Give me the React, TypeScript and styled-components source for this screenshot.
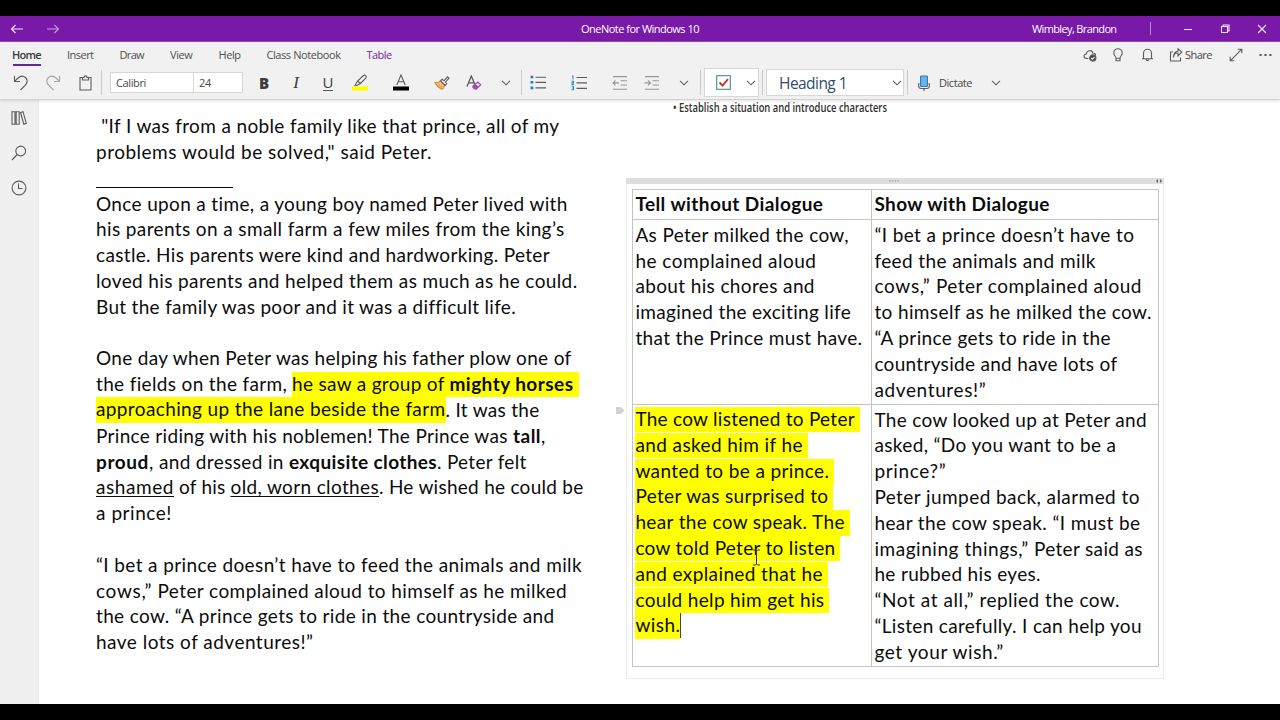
import React, { useLayoutEffect, useRef, useState } from 'react';
import styled, { createGlobalStyle, css } from 'styled-components';

const Global = createGlobalStyle`
  * { box-sizing: border-box; }
  body { margin: 0; background: #000; overflow: hidden; }
`;

const uiFont = '"Open Sans", "Noto Sans", sans-serif';
const noteFont = 'Lato, "Open Sans", sans-serif';

/* ---------- text set to a fixed measure ---------- */

type Look = { $bold?: boolean; $mark?: boolean };

const Measure = styled.span<Look & { $w: number }>`
  display: block;
  flex: none;
  width: ${(p) => p.$w}px;
  white-space: pre;
  ${(p) => p.$bold && css`font-weight: 700;`}
  ${(p) => p.$mark && css`
    background: #ffff00;
    height: 25.4px;
    margin-top: 0.5px;
    line-height: 24.8px;
  `}
`;

const Inner = styled.span<{ $under?: boolean }>`
  display: inline-block;
  transform-origin: 0 50%;
  ${(p) => p.$under && css`
    text-decoration: underline;
    text-decoration-thickness: 1px;
    text-underline-offset: 2px;
    text-decoration-skip-ink: none;
  `}
`;

type FitProps = { w: number; text: string; bold?: boolean; mark?: boolean; under?: boolean; pad?: number; squeeze?: boolean };

function Fit({ w, text, bold, mark, under, pad = 0, squeeze }: FitProps) {
  const ref = useRef<HTMLSpanElement>(null);
  const [natural, setNatural] = useState(0);
  useLayoutEffect(() => {
    if (ref.current) setNatural(ref.current.getBoundingClientRect().width);
  }, []);
  const style = !natural
    ? undefined
    : squeeze
      ? { transform: `scaleX(${w / natural})` }
      : { letterSpacing: (w - natural) / text.length };
  return (
    <Measure $w={w + pad} $bold={bold} $mark={mark}>
      <Inner ref={ref} $under={under} style={style}>{text}</Inner>
    </Measure>
  );
}

/* ---------- window frame ---------- */

const Screen = styled.div`
  width: 1280px;
  height: 720px;
  padding: 16px 0;
  background: #000;
  display: flex;
  flex-direction: column;
`;

const TitleBar = styled.header`
  height: 26px;
  flex: none;
  display: flex;
  align-items: center;
  background: #7819a8;
  border-bottom: 1px solid #8f45b8;
  color: #fff;
  font: 11px/27px ${uiFont};
`;

const Slot = styled.span<{ $w: number }>`
  width: ${(p) => p.$w}px;
  height: 100%;
  flex: none;
  display: flex;
  align-items: center;
  justify-content: center;
`;

const Space = styled.span<{ $w: number }>`
  width: ${(p) => p.$w}px;
  flex: none;
`;

const TitleRule = styled.span`
  width: 1px;
  height: 13px;
  background: #b78ad0;
`;

const Icon = styled.svg`
  display: block;
  fill: none;
  stroke: #5c5c5c;
  stroke-width: 1.1;
  flex: none;
`;

const TitleIcon = styled(Icon)<{ $dim?: boolean }>`
  stroke: ${(p) => (p.$dim ? '#c79bdc' : '#f5e6fb')};
`;

/* ---------- ribbon ---------- */

const Ribbon = styled.div`
  height: 58px;
  flex: none;
  background: #f2f1f1;
  border-bottom: 1px solid #d3d2d1;
  box-shadow: 0 1px 3px rgba(0, 0, 0, 0.12);
  position: relative;
  z-index: 1;
  color: #484848;
  font: 11px/16px ${uiFont};
`;

const Tabs = styled.nav`
  height: 26px;
  padding-left: 12px;
  display: flex;
  align-items: center;
`;

const Tab = styled.span<{ $on?: boolean; $tint?: boolean }>`
  height: 26px;
  padding-top: 5px;
  margin-right: 26px;
  color: ${(p) => (p.$tint ? '#7425a0' : p.$on ? '#3a3a3a' : '#505050')};
  font-weight: ${(p) => (p.$on ? 600 : 400)};
  ${(p) => p.$on && css`
    background: linear-gradient(#65269c, #65269c) 1px 22px / 29px 2px no-repeat;
  `}
`;

const Tools = styled.div`
  height: 31px;
  display: flex;
  align-items: center;
  padding: 0 0 1.5px 5px;
`;

const Rule = styled.span`
  width: 1px;
  height: 25px;
  flex: none;
  background: #cccbca;
`;

const FontBox = styled.div`
  height: 21px;
  display: flex;
  flex: none;
  background: #fff;
  border: 1px solid #d8d7d6;
  line-height: 19px;
`;

const FontField = styled.div<{ $w: number }>`
  width: ${(p) => p.$w}px;
  padding-left: 5px;
  & + & { border-left: 1px solid #d8d7d6; }
`;

const PickBox = styled.div<{ $w: number; $h: number }>`
  width: ${(p) => p.$w}px;
  height: ${(p) => p.$h}px;
  flex: none;
  display: flex;
  align-items: center;
  background: #fff;
  border: 1px solid #d8d7d6;
`;

const HeadingName = styled.span`
  font-size: 15.5px;
  line-height: 22px;
  color: #2f4d6b;
  padding-left: 12px;
`;

const Letter = styled.span<{ $kind: 'b' | 'i' | 'u' }>`
  color: #3c3c3c;
  line-height: 20px;
  ${(p) => p.$kind === 'b' && css`font: 800 15px/20px ${uiFont};`}
  ${(p) => p.$kind === 'i' && css`font: italic 17px/20px "Liberation Serif", serif;`}
  ${(p) => p.$kind === 'u' && css`
    font: 15px/16px ${uiFont};
    height: 17px;
    border-bottom: 1px solid #555;
  `}
`;

/* ---------- page ---------- */

const Body = styled.div`
  flex: 1;
  min-height: 0;
  display: flex;
  background: #fff;
`;

const Rail = styled.aside`
  width: 39px;
  flex: none;
  background: #f1f0f0;
  border-right: 1px solid #ebebeb;
  display: flex;
  flex-direction: column;
  align-items: center;
`;

const RailItem = styled.span`
  height: 35px;
  display: flex;
  align-items: center;
`;

const Note = styled.article`
  width: 587px;
  flex: none;
  padding: 13.2px 0 0 57px;
  font: 19px/25.8px ${noteFont};
  color: #0c0c0c;
`;

const Line = styled.div`
  height: 25.8px;
  display: flex;
`;

const Blank = styled.div`
  width: 137px;
  height: 25.8px;
  background: linear-gradient(#0c0c0c, #0c0c0c) 0 22px / 100% 1.4px no-repeat;
`;

const Side = styled.section`
  width: 538px;
  flex: none;
`;

const Bullet = styled.div`
  height: 78px;
  padding-left: 47px;
  font: 600 12.5px/15px ${uiFont};
  color: #303030;
`;

const TableFrame = styled.div`
  position: relative;
  height: 501px;
  border: 1px solid #ebebeb;
  border-top: 0;
`;

const Grip = styled.div`
  height: 6px;
  margin: 0 -1px 5px;
  background: #dedede;
  display: flex;
  align-items: center;
  justify-content: flex-end;
`;

const GridTable = styled.div`
  width: 527px;
  margin-left: 5px;
  padding: 1px;
  display: grid;
  grid-template-columns: 238px 286px;
  grid-template-rows: 29px 184px 261px;
  gap: 1px;
  background: #c4c4c4;
`;

const Cell = styled.div<{ $top: number }>`
  background: #fff;
  padding: ${(p) => p.$top}px 0 0 2.4px;
  font: 19px/25.8px ${noteFont};
  color: #0c0c0c;
`;

const Caret = styled.span`
  width: 1px;
  height: 25px;
  background: #444;
`;

const RowHandle = styled.svg`
  position: absolute;
  left: -11px;
  top: 228px;
`;

const Pointer = styled.svg`
  position: absolute;
  left: 125px;
  top: 371px;
`;

/* ---------- small drawings ---------- */

const Chevron = () => (
  <Icon width="10" height="6" viewBox="0 0 10 6"><path d="M1 0.8 5 4.8 9 0.8" /></Icon>
);

const Undo = ({ flip }: { flip?: boolean }) => (
  <Icon width="16" height="16" viewBox="0 0 16 16" opacity={flip ? 0.5 : 1}>
    <g transform={flip ? 'matrix(-1 0 0 1 16 0)' : undefined}>
      <path d="M1.5 1v5.5H7M1.8 6.2 5 3C7.5 .8 10.5 .8 12.5 2.5 15 4.8 14.5 8 12.3 10.1L7.5 15" />
    </g>
  </Icon>
);

const Indent = ({ right }: { right?: boolean }) => (
  <Icon width="16" height="14" viewBox="0 0 16 14" opacity="0.6">
    <path d="M1 .6h14M8.5 4.8H15M8.5 9H15M1 13.3h14" />
    <path d={right ? 'M.5 6.9h6M4 4.4 6.500 6.900 4 9.400' : 'M7 6.9H1M3.5 4.4 1 6.9l2.5 2.5'} />
  </Icon>
);

const leftLines: FitProps[][] = [
  [{ text: ' "If I was from a noble family like that prince, all of my', w: 463.5 }],
  [{ text: 'problems would be solved," said Peter.', w: 336 }],
  [],
  [{ text: 'Once upon a time, a young boy named Peter lived with', w: 472 }],
  [{ text: 'his parents on a small farm a few miles from the king’s', w: 468.5 }],
  [{ text: 'castle. His parents were kind and hardworking. Peter', w: 454 }],
  [{ text: 'loved his parents and helped them as much as he could.', w: 481.5 }],
  [{ text: 'But the family was poor and it was a difficult life.', w: 419 }],
  [{ text: ' ', w: 5 }],
  [{ text: 'One day when Peter was helping his father plow one of', w: 475.5 }],
  [
    { text: 'the fields on the farm, ', w: 196 },
    { text: 'he saw a group of ', w: 157.5, mark: true },
    { text: 'mighty horses ', w: 129, mark: true, bold: true },
  ],
  [{ text: 'approaching up the lane beside the farm', w: 349.5, mark: true }, { text: '. It was the', w: 94 }],
  [
    { text: 'Prince riding with his noblemen! The Prince was ', w: 417 },
    { text: 'tall', w: 28, bold: true },
    { text: ',', w: 6 },
  ],
  [
    { text: 'proud', w: 53, bold: true },
    { text: ', and dressed in ', w: 140 },
    { text: 'exquisite clothes', w: 148, bold: true },
    { text: '. Peter felt', w: 89.5 },
  ],
  [
    { text: 'ashamed', w: 78, under: true },
    { text: ' of his ', w: 56.5 },
    { text: 'old, worn clothes', w: 148.5, under: true },
    { text: '. He wished he could be', w: 204.5 },
  ],
  [{ text: 'a prince!', w: 76 }],
  [{ text: ' ', w: 5 }],
  [{ text: '“I bet a prince doesn’t have to feed the animals and milk', w: 486 }],
  [{ text: 'cows,” ', w: 61.5 }, { text: 'Peter complained aloud to himself as he milked', w: 409.5 }],
  [{ text: 'the cow. “A prince gets to ride in the countryside and', w: 458.5 }],
  [{ text: 'have lots of adventures!”', w: 217.5 }],
];

type Segment = [string, number];

const tellLines: Segment[][] = [
  [['As Peter milked the cow,', 213.5]],
  [['he complained aloud', 181]],
  [['about his chores and', 179.5]],
  [['imagined the exciting life', 216]],
  [['that the Prince must have.', 227]],
];

const showLines: Segment[][] = [
  [['“I bet a prince doesn’t have to', 260]],
  [['feed the animals and milk', 221.5]],
  [['cows,” ', 61.5], ['Peter complained aloud', 206]],
  [['to himself as he milked the cow.', 277.5]],
  [['“A prince gets to ride in the', 236.5]],
  [['countryside and have lots of', 243]],
  [['adventures!”', 112]],
];

const markedLines: [string, number, number][] = [
  ['The cow listened to Peter', 219.5, 5],
  ['and asked him if he', 167.5, 5],
  ['wanted to be a prince.', 194, 5],
  ['Peter was surprised to', 193, 5],
  ['hear the cow speak. The', 209.5, 5],
  ['cow told Peter to listen', 200, 5],
  ['and explained that he', 187.5, 5],
  ['could help him get his', 189, 5],
  ['wish.', 45, 0],
];

const replyLines: Segment[][] = [
  [['The cow looked up at Peter and', 272.5]],
  [['asked, “Do you want to be a', 242]],
  [['prince?”', 72]],
  [['Peter jumped back, alarmed to', 265.5]],
  [['hear the cow speak. “I must be', 266]],
  [['imagining things,” ', 159.5], ['Peter said as', 109]],
  [['he rubbed his eyes.', 166.5]],
  [['“Not at all,” ', 105], ['replied the cow.', 140.5]],
  [['“Listen carefully. I can help you', 267.5]],
  [['get your wish.”', 129.5]],
];

const Lines = ({ rows }: { rows: Segment[][] }) => (
  <>
    {rows.map((segs) => (
      <Line key={segs[0][0]}>{segs.map(([text, w]) => <Fit key={text} text={text} w={w} />)}</Line>
    ))}
  </>
);

const tabs: [string, number][] = [
  ['Home', 29], ['Insert', 26.5], ['Draw', 24.5], ['View', 22.5], ['Help', 22], ['Class Notebook', 74], ['Table', 25],
];

export default function App() {
  return (
    <Screen>
      <Global />
      <TitleBar>
        <Space $w={10} />
        <TitleIcon width="14" height="10" viewBox="0 0 14 10"><path d="M13 5H1.5M5.5 1l-4 4 4 4" /></TitleIcon>
        <Space $w={22} />
        <TitleIcon $dim width="14" height="10" viewBox="0 0 14 10"><path d="M1 5h11.5M8.5 1l4 4-4 4" /></TitleIcon>
        <Space $w={521} />
        <Fit text="OneNote for Windows 10" w={118} />
        <Space $w={333} />
        <Fit text="Wimbley, Brandon" w={84.5} />
        <Space $w={33.5} />
        <TitleRule />
        <Space $w={32} />
        <TitleIcon width="10" height="10" viewBox="0 0 10 10"><path d="M1 5.5h8" /></TitleIcon>
        <Space $w={27} />
        <TitleIcon width="10" height="10" viewBox="0 0 10 10"><path d="M1.5 2.5h6v6h-6zM3 2.3V1h6v6H7.8" /></TitleIcon>
        <Space $w={27} />
        <TitleIcon width="10" height="10" viewBox="0 0 10 10"><path d="m1 1 8 8M9 1 1 9" /></TitleIcon>
      </TitleBar>

      <Ribbon>
        <Tabs>
          {tabs.map(([name, w], i) => (
            <Tab key={name} $on={i === 0} $tint={i === 6}><Fit text={name} w={w} /></Tab>
          ))}
          <Space $w={665} />
          <Icon width="14" height="13" viewBox="0 0 14 13">
            <path d="M5.5 9.5H3.5C.3 9.3.2 5.3 3.3 5 3.6 1 9 .5 9.7 4c2 0 3 1 2.8 2.5" />
            <circle cx="9.8" cy="9" r="3.1" fill="#484848" /><path d="m8.3 9 1.2 1.2 2-2.2" stroke="#fff" />
          </Icon>
          <Space $w={15.5} />
          <Icon width="12" height="14" viewBox="0 0 12 14">
            <path d="M4 10.3C4 8.3 1.8 7.5 1.8 4.9a4.2 4.2 0 0 1 8.4 0C10.2 7.5 8 8.3 8 10.3zM4 10.3v2.5h4v-2.5" />
          </Icon>
          <Space $w={16.5} />
          <Icon width="13" height="14" viewBox="0 0 13 14">
            <path d="M1 10.7h11M2.5 10.5V5.2a4 4 0 0 1 8 0v5.3M5 11c.2 2.2 2.8 2.2 3 0" />
          </Icon>
          <Space $w={15} />
          <Icon width="14" height="14" viewBox="0 0 14 14">
            <path d="M4 4H1.5v9h10V9.5M4.5 9.5C4.5 6 6.5 5 9 5v2.8L12.8 4 9 .8v2.4C5.8 3.5 4.5 6 4.5 9.5z" />
          </Icon>
          <Space $w={2.5} />
          <Fit text="Share" w={27} />
          <Space $w={17} />
          <Icon width="14" height="14" viewBox="0 0 14 14"><path d="M1.2 12.8 12.8 1.2M8.7 1.2h4.1v4.1M1.2 8.7v4.1h4.1" /></Icon>
          <Space $w={15.5} />
          <Icon width="13" height="4" viewBox="0 0 13 4">
            <path d="M.5 2h2.2M5.400 2h2.200M10.300 2h2.200" style={{ strokeWidth: 2 }} />
          </Icon>
        </Tabs>

        <Tools>
          <Slot $w={32}><Undo /></Slot>
          <Slot $w={32}><Undo flip /></Slot>
          <Slot $w={32}>
            <Icon width="13" height="16" viewBox="0 0 13 16">
              <path d="M3.5 2.5H1v12.5h11V2.5H9.5M3.5 5V2.5H5C5 .3 8 .3 8 2.5h1.5V5z" />
            </Icon>
          </Slot>
          <Rule />
          <Space $w={8} />
          <FontBox>
            <FontField $w={82}><Fit text="Calibri" w={30} /></FontField>
            <FontField $w={49}><Fit text="24" w={12} /></FontField>
          </FontBox>
          <Space $w={5} />
          <Slot $w={32}><Letter $kind="b">B</Letter></Slot>
          <Slot $w={32}><Letter $kind="i">I</Letter></Slot>
          <Slot $w={32}><Letter $kind="u">U</Letter></Slot>
          <Slot $w={32}>
            <Icon width="16" height="17" viewBox="0 0 16 17">
              <rect x="0" y="12.5" width="16" height="4" fill="#ffff00" stroke="none" />
              <path d="M3 11.5 5.5 7 11.5 1.5c1.5-1 3.5.8 2.5 2.3L8.5 9.5 4.8 11.5zM5.5 7l3 2.5" />
            </Icon>
          </Slot>
          <Slot $w={50}>
            <Icon width="16" height="17" viewBox="0 0 16 17">
              <rect x="0" y="12.5" width="16" height="4" fill="#000" stroke="none" />
              <path d="M3.8 11 8 1l4.2 10M5.2 7.7h5.6" />
            </Icon>
          </Slot>
          <Slot $w={32}>
            <Icon width="16" height="14" viewBox="0 0 16 14">
              <path d="M1 6.5c2 .5 4-.2 5.5-1.5l4.5 4.5C10 11.5 9 13 7.8 13.3 5 12 2.5 9.5 1 6.5z" fill="#f5c184" stroke="#df8a2b" />
              <path d="M6.5 4.8 8 3.2l2 1.5L13.5.8l1.5 1.4L11.5 6l1.2 1.8-1.5 1.7z" />
              <path d="m4.5 9.5 1.5-1M6.5 11.3l1.5-1.3" stroke="#df8a2b" />
            </Icon>
          </Slot>
          <Slot $w={32}>
            <Icon width="16" height="15" viewBox="0 0 16 15">
              <path d="M1 11.5 5.3 1l3.4 8M2.5 7.8h5.2" style={{ strokeWidth: 1.3 }} />
              <path d="M7 11.3 11.8 7l3 2.7L10 14H8.5L7 12.6z" fill="#f1ddf5" stroke="#9b45a8" />
              <path d="m7 11.3 3 2.7 2-1.8-3-2.7z" fill="#a34fb0" stroke="#9b45a8" />
            </Icon>
          </Slot>
          <Slot $w={31}><Chevron /></Slot>
          <Rule />
          <Slot $w={32}>
            <Icon width="16" height="15" viewBox="0 0 16 15">
              <path d="M5.5 2.2H16M5.5 7.4H16M5.5 12.9H16" />
              <path d="M.5 2h2.8M.5 7.3h2.8M.5 12.9h2.8" stroke="#2b7fb8" style={{ strokeWidth: 2.6 }} />
            </Icon>
          </Slot>
          <Slot $w={49}>
            <Icon width="16" height="16" viewBox="0 0 16 16">
              <path d="M5.5 2.5H16M5.5 7.9H16M5.5 13.4H16" />
              <path d="M1 1h1v3.5M.5 6.3h2v1.6H1v1.5h1.8M.5 11.3h2v3.5h-2M1 13h1.5" stroke="#3a8cc0" />
            </Icon>
          </Slot>
          <Slot $w={34}><Indent /></Slot>
          <Slot $w={30}><Indent right /></Slot>
          <Slot $w={33}><Chevron /></Slot>
          <Rule />
          <Space $w={3} />
          <PickBox $w={55} $h={29}>
            <Slot $w={37}>
              <Icon width="15" height="15" viewBox="0 0 15 15">
                <rect x=".7" y=".7" width="13.6" height="13.6" stroke="#3c8f96" />
                <path d="m3.5 7.5 3 3 5.5-6.3" stroke="#c8372d" style={{ strokeWidth: 1.9 }} />
              </Icon>
            </Slot>
            <Slot $w={17}><Chevron /></Slot>
          </PickBox>
          <Space $w={3} />
          <Rule />
          <Space $w={3} />
          <PickBox $w={138} $h={27}>
            <HeadingName><Fit text="Heading 1" w={68} /></HeadingName>
            <Space $w={45} />
            <Chevron />
          </PickBox>
          <Space $w={3} />
          <Rule />
          <Space $w={10} />
          <Icon width="12" height="16" viewBox="0 0 12 16">
            <rect x="2.6" y="1" width="6.8" height="10.5" rx=".8" fill="#69b5ea" stroke="#2f78ad" />
            <path d="M.7 8v3c0 1.500 1 2.500 2.500 2.500h5.600c1.500 0 2.500-1 2.500-2.500V8M6 13.500V16" />
          </Icon>
          <Space $w={9} />
          <Fit text="Dictate" w={33} />
          <Space $w={18.5} />
          <Chevron />
        </Tools>
      </Ribbon>

      <Body>
        <Rail>
          <RailItem>
            <Icon width="16" height="14" viewBox="0 0 16 14">
              <path d="M1 .8h3v12.4H1zM5.2 .8h3v12.4h-3zM9.5 1.5l2.500-.8L15.300 12.300l-2.500.9z" />
            </Icon>
          </RailItem>
          <RailItem>
            <Icon width="16" height="16" viewBox="0 0 16 16"><circle cx="9.7" cy="6" r="4.9" /><path d="M6.2 9.5 1 15" /></Icon>
          </RailItem>
          <RailItem>
            <Icon width="16" height="16" viewBox="0 0 16 16"><circle cx="8" cy="8" r="6.9" /><path d="M7.5 3.5V8.5H11.5" /></Icon>
          </RailItem>
        </Rail>

        <Note>
          {leftLines.map((segs, i) =>
            segs.length === 0
              ? <Blank key={i} />
              : <Line key={i}>{segs.map((s) => <Fit key={s.text} {...s} />)}</Line>,
          )}
        </Note>

        <Side>
          <Bullet><Fit squeeze text="• Establish a situation and introduce characters" w={214} /></Bullet>
          <TableFrame>
            <Grip>
              <Icon width="10" height="2" viewBox="0 0 10 2"><path d="M0 1h10" strokeDasharray="1.5 1.3" opacity=".6" /></Icon>
              <Space $w={257} />
              <Icon width="6" height="4" viewBox="0 0 6 4"><path d="M2 0v4L0 2zM4 0v4l2-2z" fill="#666" stroke="none" /></Icon>
              <Space $w={2} />
            </Grip>
            <GridTable>
              <Cell $top={1.3}><Line><Fit bold text="Tell without Dialogue" w={188} /></Line></Cell>
              <Cell $top={1.3}><Line><Fit bold text="Show with Dialogue" w={175.5} /></Line></Cell>
              <Cell $top={1.8}><Lines rows={tellLines} /></Cell>
              <Cell $top={1.8}><Lines rows={showLines} /></Cell>
              <Cell $top={1.6}>
                {markedLines.map(([text, w, pad]) => (
                  <Line key={text}>
                    <Fit mark text={text} w={w} pad={pad} />
                    {pad === 0 && <Caret />}
                  </Line>
                ))}
              </Cell>
              <Cell $top={1.6}><Lines rows={replyLines} /></Cell>
            </GridTable>
            <RowHandle width="9" height="9" viewBox="0 0 9 9"><path d="M0 1h5l3.500 3.500L5 8H0z" fill="#d2d2d2" /></RowHandle>
            <Pointer width="9" height="17" viewBox="0 0 9 17">
              <path d="M1 1h2.500l1 1 1-1H8M4.500 2v13M1 16h2.500l1-1 1 1H8" fill="none" stroke="#333" />
            </Pointer>
          </TableFrame>
        </Side>
      </Body>
    </Screen>
  );
}
